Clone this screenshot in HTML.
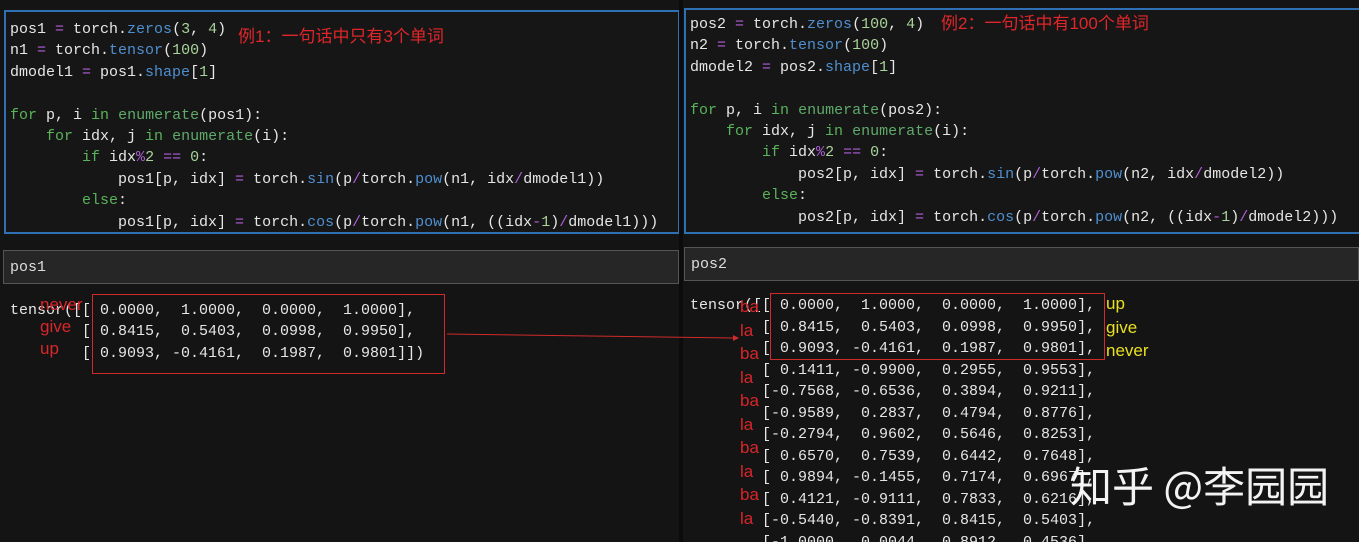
<!DOCTYPE html><html><head><meta charset="utf-8"><style>
html,body{margin:0;width:1359px;height:542px;overflow:hidden}
body{background:#141414;position:relative;font-family:"Liberation Mono",monospace;color:#e0e0e0}
.box{position:absolute;border:2px solid #2f6fb3;background:#161616}
pre{position:absolute;margin:0;font:15px/21.4px "Liberation Mono",monospace;color:#e6e6e6}
.k{color:#59b35a}.f{color:#4f8fd0}.n{color:#a9d39a}.o{color:#b05fd8}.g{color:#5faa6a}
.hdr{position:absolute;background:#262626;border:1px solid #555;height:34px;font:15px "Liberation Mono",monospace;color:#ddd;line-height:34px;padding-left:6px;box-sizing:border-box}
.cn{position:absolute;color:#e0262a;font:17px "Liberation Sans","Noto Sans CJK SC",sans-serif}
.lab{position:absolute;font:17px/22px "Liberation Sans",sans-serif}
.rb{position:absolute;border:1px solid #d02a2a}
</style></head><body>
<div class="box" style="left:4px;top:10px;width:672px;height:220px"></div>
<div class="box" style="left:684px;top:8px;width:675px;height:222px;border-right:none"></div>
<div style="position:absolute;left:679px;top:0;width:4px;height:542px;background:#0c0c0c"></div>
<pre style="left:10px;top:19px">pos1 <span class="o">=</span> torch.<span class="f">zeros</span>(<span class="n">3</span>, <span class="n">4</span>)
n1 <span class="o">=</span> torch.<span class="f">tensor</span>(<span class="n">100</span>)
dmodel1 <span class="o">=</span> pos1.<span class="f">shape</span>[<span class="n">1</span>]

<span class="k">for</span> p, i <span class="k">in</span> <span class="g">enumerate</span>(pos1):
    <span class="k">for</span> idx, j <span class="k">in</span> <span class="g">enumerate</span>(i):
        <span class="k">if</span> idx<span class="o">%</span><span class="n">2</span> <span class="o">==</span> <span class="n">0</span>:
            pos1[p, idx] <span class="o">=</span> torch.<span class="f">sin</span>(p<span class="o">/</span>torch.<span class="f">pow</span>(n1, idx<span class="o">/</span>dmodel1))
        <span class="k">else</span>:
            pos1[p, idx] <span class="o">=</span> torch.<span class="f">cos</span>(p<span class="o">/</span>torch.<span class="f">pow</span>(n1, ((idx<span class="o">-</span><span class="n">1</span>)<span class="o">/</span>dmodel1)))</pre>
<div class="cn" style="left:238px;top:22px">例1：一句话中只有3个单词</div>
<pre style="left:690px;top:14px">pos2 <span class="o">=</span> torch.<span class="f">zeros</span>(<span class="n">100</span>, <span class="n">4</span>)
n2 <span class="o">=</span> torch.<span class="f">tensor</span>(<span class="n">100</span>)
dmodel2 <span class="o">=</span> pos2.<span class="f">shape</span>[<span class="n">1</span>]

<span class="k">for</span> p, i <span class="k">in</span> <span class="g">enumerate</span>(pos2):
    <span class="k">for</span> idx, j <span class="k">in</span> <span class="g">enumerate</span>(i):
        <span class="k">if</span> idx<span class="o">%</span><span class="n">2</span> <span class="o">==</span> <span class="n">0</span>:
            pos2[p, idx] <span class="o">=</span> torch.<span class="f">sin</span>(p<span class="o">/</span>torch.<span class="f">pow</span>(n2, idx<span class="o">/</span>dmodel2))
        <span class="k">else</span>:
            pos2[p, idx] <span class="o">=</span> torch.<span class="f">cos</span>(p<span class="o">/</span>torch.<span class="f">pow</span>(n2, ((idx<span class="o">-</span><span class="n">1</span>)<span class="o">/</span>dmodel2)))</pre>
<div class="cn" style="left:941px;top:9px">例2：一句话中有100个单词</div>
<div class="hdr" style="left:3px;top:250px;width:676px">pos1</div>
<div class="hdr" style="left:684px;top:247px;width:675px">pos2</div>
<pre style="left:10px;top:300px">tensor([[ 0.0000,  1.0000,  0.0000,  1.0000],
        [ 0.8415,  0.5403,  0.0998,  0.9950],
        [ 0.9093, -0.4161,  0.1987,  0.9801]])</pre>
<pre style="left:690px;top:295px;line-height:21.5px">tensor([[ 0.0000,  1.0000,  0.0000,  1.0000],
        [ 0.8415,  0.5403,  0.0998,  0.9950],
        [ 0.9093, -0.4161,  0.1987,  0.9801],
        [ 0.1411, -0.9900,  0.2955,  0.9553],
        [-0.7568, -0.6536,  0.3894,  0.9211],
        [-0.9589,  0.2837,  0.4794,  0.8776],
        [-0.2794,  0.9602,  0.5646,  0.8253],
        [ 0.6570,  0.7539,  0.6442,  0.7648],
        [ 0.9894, -0.1455,  0.7174,  0.6967],
        [ 0.4121, -0.9111,  0.7833,  0.6216],
        [-0.5440, -0.8391,  0.8415,  0.5403],
        [-1.0000,  0.0044,  0.8912,  0.4536],</pre>
<div class="rb" style="left:92px;top:294px;width:351px;height:78px"></div>
<div class="rb" style="left:770px;top:293px;width:333px;height:65px"></div>
<div class="lab" style="left:40px;top:294px;color:#d8262a">never<br>give<br>up</div>
<div class="lab" style="left:740px;top:295px;color:#d8262a;line-height:23.5px">ba<br>la<br>ba<br>la<br>ba<br>la<br>ba<br>la<br>ba<br>la</div>
<div class="lab" style="left:1106px;top:292px;color:#e8e020;line-height:23.5px">up<br>give<br>never</div>
<svg style="position:absolute;left:0;top:0" width="1359" height="542"><line x1="447" y1="334" x2="733" y2="338" stroke="#d02a2a" stroke-width="1"/><path d="M733 335 L739 338 L733 341Z" fill="#d02a2a"/></svg>
<div style="position:absolute;left:1070px;top:459px;color:#fff;font:42px/52px 'Noto Sans CJK SC',sans-serif;opacity:.95">知乎 @李园园</div>
</body></html>
